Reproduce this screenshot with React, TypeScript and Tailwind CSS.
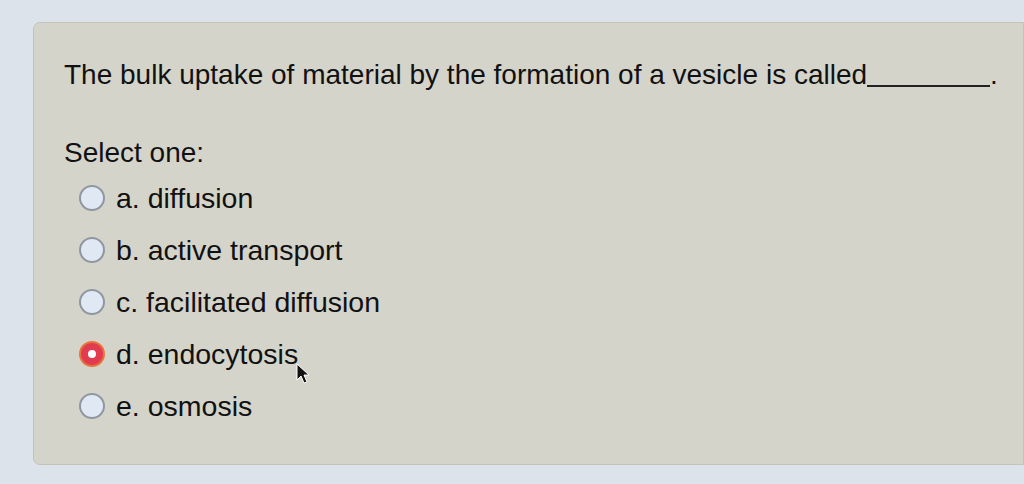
export default function App() {
  return (
    <div className="h-[484px] w-[1024px] overflow-hidden bg-[#dde3ea] pl-[33px] pt-[22px] pb-[19px] font-['Liberation_Sans',Arial,sans-serif] text-[#111]">
      <div className="relative h-[443px] rounded-l-[7px] border border-[#c3c3ba] bg-[#d5d4cb] pl-[30px] pt-[36px]">
        <p className="text-[28px] leading-[32px]">
          The bulk uptake of material by the formation of a vesicle is called
          <span className="inline-block w-[123px] border-b-2 border-[#222] align-[-3px]" />.
        </p>
        <p className="mt-[46px] text-[28px] leading-[32px]">Select one:</p>
        <div className="mt-[3px] flex flex-col">
          {[
            "a. diffusion",
            "b. active transport",
            "c. facilitated diffusion",
            "d. endocytosis",
            "e. osmosis",
          ].map((label) => {
            const checked = label.startsWith("d.");
            return (
              <div key={label} className="flex h-[52px] items-center gap-[11px] pl-[15px]">
                {checked ? (
                  <span className="flex h-[26px] w-[26px] items-center justify-center rounded-full border-2 border-[#e6743c] bg-[#e23a4e]">
                    <span className="h-[8px] w-[8px] rounded-full bg-white" />
                  </span>
                ) : (
                  <span className="h-[26px] w-[26px] rounded-full border-2 border-[#8f979f] bg-[#dfe8f3]" />
                )}
                <span className="text-[28.5px] leading-[32px]">{label}</span>
              </div>
            );
          })}
        </div>
        <svg
          className="absolute left-[262px] top-[340px]"
          width="14"
          height="22"
          viewBox="0 0 14 22"
        >
          <path d="M1 1 L1 17 L5 13 L8 20 L11 19 L8 12 L13 12 Z" fill="#111" stroke="#fff" strokeWidth="1" />
        </svg>
      </div>
    </div>
  );
}
